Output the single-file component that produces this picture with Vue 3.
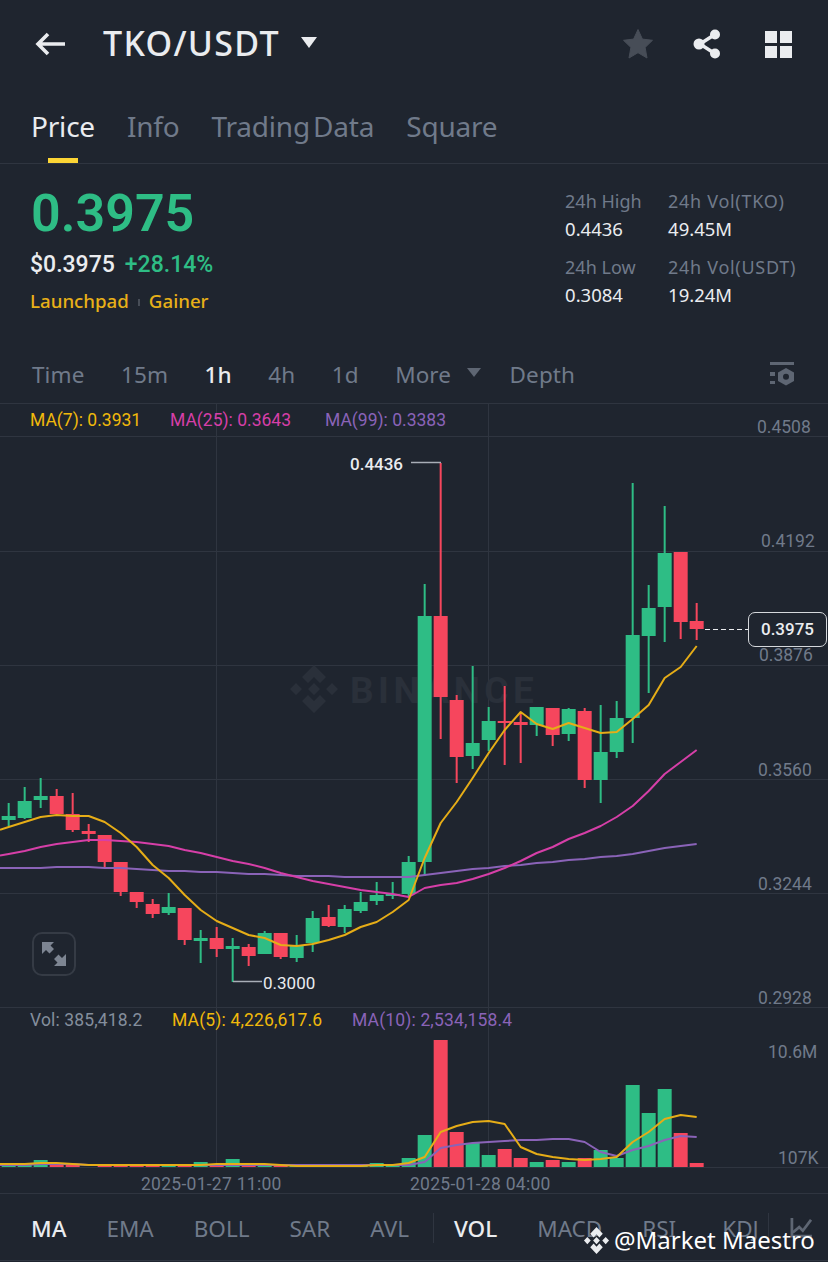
<template>
  <div class="page">
    <!-- header -->
    <header class="topbar">
      <svg class="back" width="32" height="26" viewBox="0 0 32 26">
        <path d="M14 3 4 13l10 10M4 13h27" fill="none" stroke="#eaecef" stroke-width="3.6" />
      </svg>
      <span class="pair">TKO/USDT</span>
      <span class="caret"></span>
      <div class="top-icons">
        <svg width="32" height="32" viewBox="0 0 32 32">
          <path d="M16 1.500l4.400 9.600 10.100 1.200-7.400 7.100 1.900 10.600-9-5.300-9 5.300 1.900-10.600-7.400-7.100 10.100-1.200z" fill="#474d57" stroke="#474d57" stroke-linejoin="round" />
        </svg>
        <svg width="32" height="32" viewBox="0 0 32 32">
          <path d="M23 7 9 16l14 9" fill="none" stroke="#eaecef" stroke-width="3.500" />
          <circle cx="24" cy="6.500" r="5" fill="#eaecef" />
          <circle cx="8" cy="16" r="5.500" fill="#eaecef" />
          <circle cx="24" cy="25.500" r="5" fill="#eaecef" />
        </svg>
        <div class="grid-icon"><i></i><i></i><i></i><i></i></div>
      </div>
    </header>

    <!-- tabs -->
    <nav class="tabs">
      <span v-for="t in tabs" :key="t" class="tab" :class="{ on: t === 'Price' }">{{ t }}</span>
    </nav>

    <!-- price block -->
    <section class="summary">
      <div class="left">
        <div class="last">0.3975</div>
        <div class="sub"><b>$0.3975</b><em>+28.14%</em></div>
        <div class="tags"><span>Launchpad</span><i></i><span>Gainer</span></div>
      </div>
      <div class="stats">
        <div v-for="s in stats" :key="s.label" class="stat">
          <label>{{ s.label }}</label>
          <strong>{{ s.value }}</strong>
        </div>
      </div>
    </section>

    <!-- interval bar -->
    <div class="intervals">
      <span v-for="t in intervals" :key="t" :class="{ on: t === '1h' }">{{ t }}</span>
      <span class="more">More<i class="caret small"></i></span>
      <span>Depth</span>
      <svg class="settings" width="25" height="26" viewBox="0 0 25 26">
        <path d="M0 1h24v3H0zM0 11h5v4H0zM0 20h5v3H0z" fill="#5e6673" />
        <path d="M16 7l8 4.500v8.500l-8 4.500-8-4.500v-8.500z" fill="#5e6673" />
        <circle cx="16" cy="15.700" r="3" fill="#1f252f" />
      </svg>
    </div>

    <!-- chart -->
    <div class="chart">
      <svg width="828" height="791" viewBox="0 403 828 791" class="plot">
        <line v-for="y in gridY" :key="y" x1="0" x2="828" :y1="y" :y2="y" class="grid" />
        <line v-for="x in gridX" :key="x" :x1="x" :x2="x" y1="403" y2="1167" class="grid" />
        <line x1="0" x2="828" y1="403.500" y2="403.500" class="grid" />
        <line x1="0" x2="828" y1="1167.500" y2="1167.500" class="grid" />
        <line x1="0" x2="828" y1="1193.500" y2="1193.500" class="grid" />

        <!-- watermark -->
        <g fill="#2a303a">
          <path d="M314 665l12 12-6 6-6-6-6 6-6-6zM290 689l6-6 6 6-6 6zM314 683l6 6-6 6-6-6zM338 689l-6 6-6-6 6-6zM302 701l6-6 6 6 6-6 6 6-12 12z" />
          <text x="350" y="703" class="wm">BINANCE</text>
        </g>

        <!-- candles -->
        <g v-for="(c, i) in candles" :key="i" :fill="c[0] ? '#2ebd85' : '#f6465d'">
          <rect :x="cx(i) - 1" :y="c[1]" width="2" :height="c[2] - c[1]" />
          <rect :x="cx(i) - 7" :y="c[3]" width="14" :height="c[4] - c[3]" />
        </g>
        <polyline :points="line(ma99)" class="ln" stroke="#8a63b8" />
        <polyline :points="line(ma25)" class="ln" stroke="#d63fa8" />
        <polyline :points="line(ma7)" class="ln" stroke="#e6ad17" />

        <!-- volume -->
        <rect v-for="(v, i) in vols" :key="'v' + i" :x="cx(i) - 7" :y="v" width="14" :height="1167 - v" :fill="candles[i][0] ? '#2ebd85' : '#f6465d'" />
        <polyline :points="line(volMa10)" class="ln" stroke="#8a63b8" />
        <polyline :points="line(volMa5)" class="ln" stroke="#e6ad17" />

        <!-- hi / lo markers -->
        <path d="M411 462.500h30" class="mark" />
        <path d="M233 981.500h29" class="mark" />
        <text x="350" y="470" class="hl hi">0.4436</text>
        <text x="263" y="989" class="hl">0.3000</text>
        <path d="M705 629.500h43" stroke="#eaecef" stroke-dasharray="5 3" fill="none" />

        <!-- legends -->
        <text x="30" y="426" class="lg" fill="#f0b90b">MA(7): 0.3931</text>
        <text x="170" y="426" class="lg" fill="#d63fa8">MA(25): 0.3643</text>
        <text x="325" y="426" class="lg" fill="#8a63b8">MA(99): 0.3383</text>
        <text x="30" y="1026" class="lg wide" fill="#848e9c">Vol: 385,418.2</text>
        <text x="172" y="1026" class="lg wide" fill="#f0b90b">MA(5): 4,226,617.6</text>
        <text x="352" y="1026" class="lg wide" fill="#8a63b8">MA(10): 2,534,158.4</text>

        <!-- axis -->
        <text v-for="a in axis" :key="a.t" :x="a.x" :y="a.y" class="ax">{{ a.t }}</text>
        <text x="141" y="1190" class="ax date">2025-01-27 11:00</text>
        <text x="410" y="1190" class="ax date">2025-01-28 04:00</text>
      </svg>
      <div class="now">0.3975</div>
      <div class="expand">
        <svg width="26" height="26" viewBox="0 0 26 26">
          <path d="M1 1h12L9.500 4.500l3.500 3.500-4.500 4.500L5 9 1 13zM25 25H13l3.500-3.500-3.500-3.500 4.500-4.500 3.500 3.500 4-4z" fill="#7d8592" />
        </svg>
      </div>
    </div>

    <!-- indicators -->
    <div class="indicators">
      <span class="on">MA</span><span>EMA</span><span>BOLL</span><span>SAR</span><span>AVL</span>
      <i class="sep"></i>
      <span class="on">VOL</span><span>MACD</span><span>RSI</span><span class="kdj">KDJ</span>
      <i class="sep last-sep"></i>
      <svg width="22" height="20" viewBox="0 0 24 22">
        <path d="M2 0v20h22" fill="none" stroke="#5e6673" stroke-width="3" />
        <path d="M3 16l7-6 4 4 9-12" fill="none" stroke="#5e6673" stroke-width="3" />
      </svg>
    </div>

    <!-- repost watermark -->
    <div class="credit">
      <svg width="27" height="29" viewBox="0 0 28 28" preserveAspectRatio="none">
        <path d="M14 1l6.500 6.500L17 11l-3-3-3 3-3.500-3.500zM1 14l3.500-3.500L8 14l-3.500 3.500zM14 10.500l3.500 3.500-3.500 3.500-3.500-3.500zM27 14l-3.500 3.500L20 14l3.500-3.500zM7.500 20.500 11 17l3 3 3-3 3.500 3.500L14 27z" fill="#eaecef" />
      </svg>
      <span>@Market Maestro</span>
    </div>
  </div>
</template>

<script setup>
const tabs = ['Price', 'Info', 'Trading Data', 'Square']
const intervals = ['Time', '15m', '1h', '4h', '1d']

const stats = [
  { label: '24h High', value: '0.4436' },
  { label: '24h Vol(TKO)', value: '49.45M' },
  { label: '24h Low', value: '0.3084' },
  { label: '24h Vol(USDT)', value: '19.24M' }
]

const gridY = [436.5, 551.5, 665.5, 779.5, 893.5, 1007.5]
const gridX = [216.5, 488.5]

const axis = [
  { t: '0.4508', x: 757, y: 433 },
  { t: '0.4192', x: 761, y: 547 },
  { t: '0.3876', x: 759, y: 661 },
  { t: '0.3560', x: 758, y: 776 },
  { t: '0.3244', x: 758, y: 890 },
  { t: '0.2928', x: 758, y: 1004 },
  { t: '10.6M', x: 768, y: 1058 },
  { t: '107K', x: 778, y: 1164 }
]

const cx = i => 8.67 + 16 * i
// lines run off the left edge, so extend the first segment to x=0
const line = arr => {
  const start = arr[0] + (arr[0] - arr[1]) * 0.54
  return `0,${start} ` + arr.map((y, i) => `${cx(i)},${y}`).join(' ')
}

// [green, wickTop, wickBottom, bodyTop, bodyBottom]
const candles = [
  [1, 803, 826, 816, 820], [1, 787, 819, 801, 818], [1, 778, 808, 796, 800], [0, 789, 814, 796, 814],
  [0, 793, 832, 814, 830], [0, 824, 842, 831, 834], [0, 835, 867, 835, 862], [0, 862, 896, 862, 892],
  [0, 892, 908, 892, 902], [0, 899, 918, 904, 914], [1, 893, 915, 907, 913], [0, 908, 945, 908, 940],
  [1, 930, 963, 938, 941], [0, 927, 957, 938, 949], [1, 938, 982, 946, 949], [0, 944, 966, 947, 956],
  [1, 931, 954, 933, 954], [0, 933, 959, 933, 957], [1, 935, 962, 946, 958], [1, 911, 952, 918, 943],
  [0, 905, 927, 917, 926], [1, 905, 933, 909, 927], [1, 892, 913, 902, 911], [1, 882, 905, 895, 901],
  [1, 882, 899, 894, 896], [1, 856, 897, 862, 894], [1, 584, 876, 616, 862], [0, 463, 739, 616, 697],
  [0, 695, 783, 700, 757], [1, 666, 769, 743, 756], [1, 707, 751, 721, 740], [0, 686, 765, 721, 723],
  [0, 712, 763, 722, 725], [1, 708, 736, 707, 725], [0, 708, 746, 708, 735], [1, 708, 741, 709, 734],
  [0, 708, 788, 711, 780], [1, 705, 803, 752, 780], [1, 701, 758, 718, 752], [1, 483, 743, 635, 718],
  [1, 585, 693, 608, 636], [1, 506, 642, 553, 607], [0, 552, 639, 552, 622], [0, 603, 640, 621, 629]
]

const ma7 = [827, 822, 817, 815, 816, 816, 822, 833, 847, 865, 878, 895, 910, 921, 928, 935, 938, 945, 946, 944, 940, 935,
  927, 922, 912, 900, 858, 823, 802, 778, 753, 730, 712, 724, 729, 723, 728, 733, 732, 719, 705, 678, 667, 646]
const ma25 = [854, 851, 847, 844, 842, 840, 840, 841, 842, 844, 846, 850, 853, 857, 861, 864, 868, 873, 877, 881, 884, 887,
  890, 892, 894, 897, 888, 885, 883, 879, 874, 868, 861, 853, 847, 839, 833, 826, 817, 806, 791, 774, 762, 750]
const ma99 = [868, 868, 868, 867, 867, 867, 868, 868, 869, 870, 871, 871, 872, 872, 873, 874, 874, 875, 876, 876, 876, 877,
  877, 877, 877, 877, 875, 873, 871, 869, 868, 866, 865, 863, 862, 860, 859, 857, 856, 854, 851, 848, 846, 844]

const vols = [1164, 1164, 1160, 1164, 1165, 1167, 1165, 1165, 1165, 1165, 1165, 1165, 1162, 1165, 1159, 1166, 1164,
  1166, 1166, 1166, 1166, 1166, 1166, 1163, 1166, 1158, 1135, 1040, 1132, 1143, 1155, 1149, 1158, 1162, 1160, 1162,
  1158, 1150, 1158, 1085, 1113, 1089, 1133, 1163]
const volMa5 = [1164, 1164, 1163, 1163, 1164, 1165, 1165, 1165, 1165, 1165, 1165, 1165, 1165, 1164, 1164, 1164, 1164,
  1165, 1166, 1166, 1166, 1166, 1166, 1165, 1165, 1163, 1157, 1132, 1126, 1122, 1121, 1124, 1147, 1154, 1157, 1159,
  1160, 1159, 1157, 1142, 1132, 1119, 1115, 1117]
const volMa10 = [1165, 1165, 1164, 1164, 1164, 1165, 1165, 1165, 1165, 1165, 1165, 1165, 1165, 1165, 1165, 1165, 1165,
  1165, 1165, 1165, 1165, 1165, 1165, 1165, 1165, 1165, 1162, 1148, 1145, 1143, 1142, 1141, 1140, 1140, 1139, 1139,
  1142, 1152, 1156, 1150, 1146, 1140, 1136, 1137]
</script>

<style>
html, body { background: #1f252f; }
</style>

<style scoped>
.page {
  position: relative;
  width: 828px;
  height: 1262px;
  overflow: hidden;
  background: #1f252f;
  font-family: "Noto Sans", sans-serif;
  color: #eaecef;
}
.topbar {
  height: 88px;
  display: flex;
  align-items: center;
  padding: 0 36px 0 34px;
  box-sizing: border-box;
}
.pair {
  margin-left: 37px;
  margin-bottom: 2px;
  font-size: 34px;
  font-weight: 500;
  letter-spacing: 1.3px;
}
.caret {
  width: 0;
  height: 0;
  margin-left: 21px;
  margin-bottom: 3px;
  border-left: 8px solid transparent;
  border-right: 8px solid transparent;
  border-top: 11px solid #eaecef;
}
.top-icons {
  margin-left: auto;
  display: flex;
  align-items: center;
  gap: 37px;
}
.grid-icon {
  margin-left: 5px;
  display: grid;
  grid-template-columns: 12px 12px;
  grid-template-rows: 12px 12px;
  gap: 3px;
}
.grid-icon i { background: #eaecef; }
.tabs {
  height: 76px;
  display: flex;
  gap: 32px;
  padding: 18px 31px 0;
  box-sizing: border-box;
  border-bottom: 1px solid #2f3540;
  font-size: 28px;
  letter-spacing: -0.2px;
  word-spacing: -4px;
  color: #707a8a;
}
.tab { position: relative; height: 40px; line-height: 40px; }
.tab.on { color: #eaecef; }
.tab.on::after {
  content: "";
  position: absolute;
  left: 17px;
  bottom: -17px;
  width: 30px;
  height: 5px;
  background: #fcd535;
}
.summary {
  height: 181px;
  display: flex;
  justify-content: space-between;
  padding: 21px 32px 0 30px;
  box-sizing: border-box;
}
.last {
  font-family: Roboto, sans-serif;
  font-size: 52px;
  line-height: 58px;
  font-weight: 600;
  color: #2ebd85;
  margin-left: 1px;
}
.sub {
  margin-top: 7px;
  display: flex;
  gap: 10px;
  align-items: baseline;
  font-family: Roboto, sans-serif;
  font-size: 23px;
  line-height: 30px;
}
.sub b { font-weight: 500; }
.sub em { font-style: normal; font-weight: 500; color: #2ebd85; }
.tags {
  margin-top: 8px;
  display: flex;
  align-items: center;
  gap: 9px;
  font-size: 18.7px;
  font-weight: 500;
  color: #e8b018;
}
.tags i { width: 2px; height: 7px; margin-top: 3px; background: #474d57; }
.stats {
  display: grid;
  grid-template-columns: 103px auto;
  row-gap: 10px;
  align-content: start;
  margin-top: 2px;
}
.stat label {
  display: block;
  font-size: 18px;
  line-height: 28px;
  color: #707a8a;
}
.stat:nth-child(even) label { letter-spacing: 0.7px; }
.stat strong {
  display: block;
  font-size: 18.5px;
  line-height: 28px;
  font-weight: 400;
  color: #eaecef;
}
.intervals {
  height: 58px;
  display: flex;
  align-items: center;
  gap: 36.5px;
  padding: 0 33px 0 32px;
  box-sizing: border-box;
  font-size: 22.5px;
  letter-spacing: 0.1px;
  color: #707a8a;
}
.intervals .on { color: #eaecef; font-weight: 500; }
.more { display: flex; align-items: center; }
.caret.small {
  margin-left: 16px;
  margin-right: -8px;
  margin-bottom: 4px;
  border-left-width: 7px;
  border-right-width: 7px;
  border-top: 9px solid #5e6673;
}
.settings { margin-left: auto; }
.chart { position: relative; height: 791px; }
.plot { display: block; }
.grid { stroke: #2f3540; stroke-width: 1; }
.ln { fill: none; stroke-width: 2; stroke-linejoin: round; }
.mark { fill: none; stroke: #a8aeb7; stroke-width: 1.500; }
.hl { font: 400 17px Roboto, sans-serif; fill: #eaecef; }
.hi { font-weight: 500; }
.lg { font: 400 17.500px Roboto, sans-serif; }
.wide { letter-spacing: 0.15px; }
.ax { font: 400 17.500px Roboto, sans-serif; fill: #707a8a; }
.date { letter-spacing: 0.27px; }
.wm { font: 700 37px Roboto, sans-serif; letter-spacing: 4.500px; }
.now {
  position: absolute;
  left: 748px;
  top: 209px;
  width: 77px;
  height: 33px;
  border: 1px solid #d5d8dc;
  border-radius: 7px;
  background: #1f252f;
  text-align: center;
  font: 500 17px/33px Roboto, sans-serif;
}
.expand {
  position: absolute;
  left: 32px;
  top: 529px;
  width: 40px;
  height: 40px;
  border: 2px solid #353b45;
  border-radius: 10px;
  display: flex;
  align-items: center;
  justify-content: center;
}
.indicators {
  height: 67px;
  display: flex;
  align-items: center;
  gap: 40px;
  padding: 2px 0 0 31px;
  box-sizing: border-box;
  border-bottom: 1px solid #2f3540;
  font-size: 22.5px;
  color: #707a8a;
}
.indicators .on { color: #eaecef; font-weight: 500; }
.sep { width: 1px; height: 30px; background: #2f3540; margin: 0 -20px 0 -16px; }
.kdj { margin-left: 6px; }
.last-sep { margin: 0 -19px 0 -31px; }
.credit {
  position: absolute;
  left: 583px;
  top: 1223px;
  display: flex;
  align-items: center;
  gap: 4px;
  white-space: nowrap;
  font-size: 24px;
  color: #fff;
}
.credit span { margin-bottom: 2px; }
</style>
